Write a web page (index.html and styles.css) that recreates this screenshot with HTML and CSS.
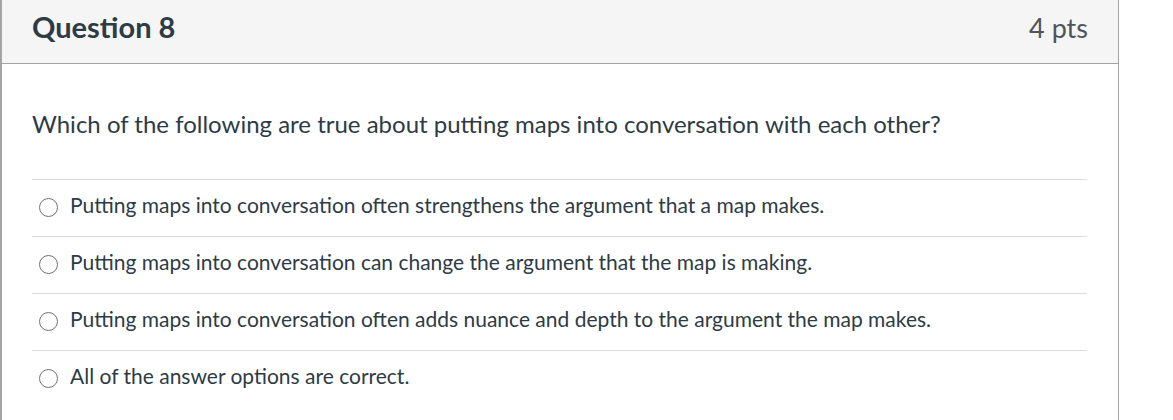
FILE: index.html
```html
<!DOCTYPE html>
<html>
<head>
<meta charset="utf-8">
<link rel="stylesheet" href="styles.css">
</head>
<body>
<div class="question">
  <div class="header">
    <h2 class="title">Question 8</h2>
    <span class="pts">4 pts</span>
  </div>
  <div class="content">
    <p class="prompt">Which of the following are true about putting maps into conversation with each other?</p>
    <div class="answers">
      <label class="answer"><span class="radio"></span><span class="text">Putting maps into conversation often strengthens the argument that a map makes.</span></label>
      <label class="answer"><span class="radio"></span><span class="text">Putting maps into conversation can change the argument that the map is making.</span></label>
      <label class="answer"><span class="radio"></span><span class="text">Putting maps into conversation often adds nuance and depth to the argument the map makes.</span></label>
      <label class="answer"><span class="radio"></span><span class="text">All of the answer options are correct.</span></label>
    </div>
  </div>
</div>
</body>
</html>
```
FILE: styles.css
```css
html, body {
  margin: 0;
  padding: 0;
  background: #ffffff;
}
body {
  font-family: Lato, "Noto Sans", sans-serif;
  color: #2d3b45;
}
.question {
  width: 1116px;
  height: 420px;
  border-left: 2px solid #a5a5a5;
  border-right: 1px solid #a5a5a5;
}
.header {
  height: 64px;
  background: #f5f5f5;
  border-bottom: 1px solid #a5a5a5;
  display: flex;
  align-items: baseline;
  justify-content: space-between;
  padding: 10px 30px 0 30px;
  box-sizing: border-box;
}
.title {
  margin: 0;
  font-size: 29px;
  line-height: 1.2;
  font-weight: 700;
  color: #2d3b45;
}
.pts {
  font-size: 27px;
  line-height: 1.2;
  color: #4f5559;
}
.content {
  padding: 0 31px 0 30px;
}
.prompt {
  margin: 0;
  padding-top: 45px;
  padding-bottom: 41px;
  font-size: 24px;
  line-height: 29px;
}
.answers {
  display: flex;
  flex-direction: column;
}
.answer {
  display: flex;
  align-items: flex-start;
  height: 44px;
  padding-top: 12px;
  border-top: 1px solid #dcdcdc;
  font-size: 21px;
  line-height: 1.2;
}
.radio {
  width: 19px;
  height: 19px;
  margin-top: 6px;
  border: 1.5px solid #727272;
  border-radius: 50%;
  box-sizing: border-box;
  margin-left: 7px;
  margin-right: 12px;
  flex: none;
}
```
